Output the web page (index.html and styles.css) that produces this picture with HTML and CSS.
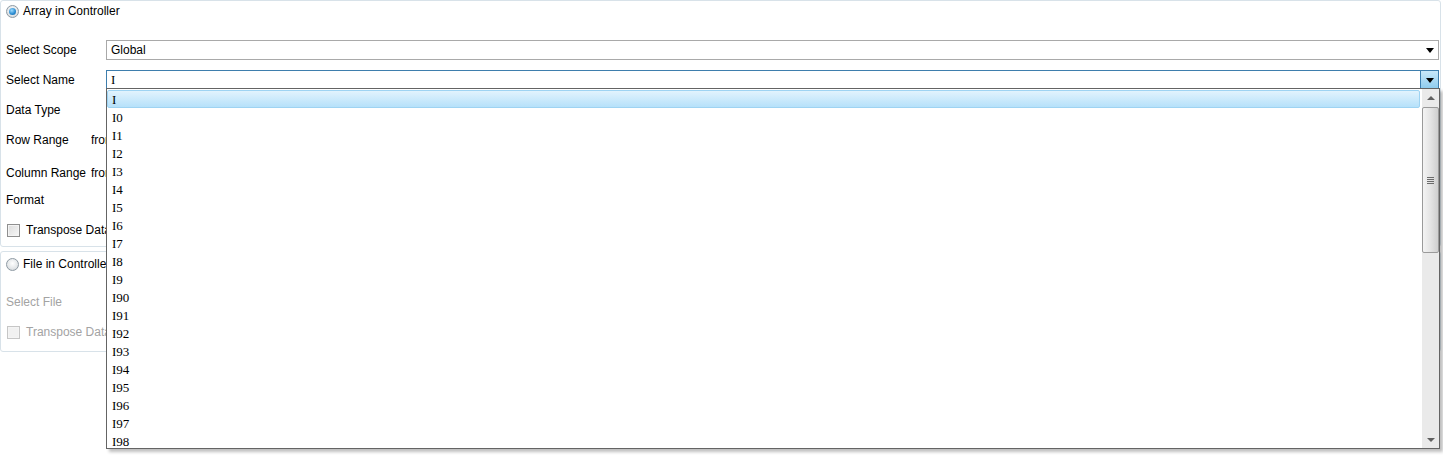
FILE: index.html
```html
<!DOCTYPE html>
<html>
<head>
<meta charset="utf-8">
<link rel="stylesheet" href="styles.css">
</head>
<body>
<div class="page">
  <div class="panel panel-array">
    <div class="row row-radio">
      <span class="radio checked"></span><span class="radio-label">Array in Controller</span>
    </div>
    <div class="row row-scope">
      <span class="label">Select Scope</span>
      <div class="combo"><span class="combo-text">Global</span><span class="combo-btn"><span class="tri"></span></span></div>
    </div>
    <div class="row row-name">
      <span class="label">Select Name</span>
      <div class="combo focused"><span class="combo-text">I</span><span class="combo-btn"><span class="tri"></span></span></div>
    </div>
    <div class="row row-dtype">
      <span class="label">Data Type</span>
    </div>
    <div class="row row-range">
      <span class="label short">Row Range</span><span class="from">from</span>
    </div>
    <div class="row row-col">
      <span class="label short">Column Range</span><span class="from">from</span>
    </div>
    <div class="row row-format">
      <span class="label">Format</span>
    </div>
    <div class="row row-transpose">
      <span class="check"></span><span class="check-label">Transpose Data</span>
    </div>
  </div>
  <div class="panel panel-file">
    <div class="row row-radio">
      <span class="radio"></span><span class="radio-label">File in Controller</span>
    </div>
    <div class="row row-file">
      <span class="label disabled">Select File</span>
    </div>
    <div class="row row-transpose2">
      <span class="check disabled"></span><span class="check-label disabled">Transpose Data</span>
    </div>
  </div>

  <div class="dropdown">
    <ul class="list">
      <li class="selected">I</li>
      <li>I0</li>
      <li>I1</li>
      <li>I2</li>
      <li>I3</li>
      <li>I4</li>
      <li>I5</li>
      <li>I6</li>
      <li>I7</li>
      <li>I8</li>
      <li>I9</li>
      <li>I90</li>
      <li>I91</li>
      <li>I92</li>
      <li>I93</li>
      <li>I94</li>
      <li>I95</li>
      <li>I96</li>
      <li>I97</li>
      <li>I98</li>
    </ul>
    <div class="scrollbar">
      <span class="sb-arrow up"></span>
      <div class="sb-track">
        <div class="sb-thumb"><span class="grip"></span></div>
      </div>
      <span class="sb-arrow down"></span>
    </div>
  </div>
</div>
</body>
</html>
```
FILE: styles.css
```css
html, body {
  margin: 0;
  padding: 0;
  background: #ffffff;
}
body {
  font-family: "Liberation Sans", Arial, sans-serif;
  font-size: 12px;
  color: #000;
  width: 1443px;
  height: 455px;
  overflow: hidden;
}
.page {
  position: relative;
  padding: 0 1px 0 0;
}
.panel {
  border: 1px solid #d8e2e9;
  border-radius: 3px;
  margin-left: 0;
  width: 1441px;
  box-sizing: border-box;
  display: flex;
  flex-direction: column;
}
.panel-array {
  padding-bottom: 6px;
}
.panel-file {
  margin-top: 4px;
  padding-bottom: 9px;
}
.row {
  height: 20px;
  display: flex;
  align-items: center;
  padding-left: 5px;
}
.row-scope { margin-top: 19px; }
.row-name { margin-top: 10px; }
.row-dtype { margin-top: 10px; }
.row-range { margin-top: 10px; }
.row-col { margin-top: 13px; }
.row-format { margin-top: 7px; }
.row-transpose { margin-top: 10px; }
.panel-file .row-radio { margin-top: 2px; }
.row-file { margin-top: 18px; }
.row-transpose2 { margin-top: 10px; }

.label {
  width: 100px;
  flex: none;
}
.label.short {
  width: 85px;
}
.from {
  width: 15px;
  overflow: hidden;
  white-space: nowrap;
  flex: none;
}
.disabled {
  color: #a3a3a3;
}
.radio {
  width: 11px;
  height: 11px;
  border-radius: 50%;
  border: 1px solid #8e9aa3;
  background: radial-gradient(circle at 50% 40%, #ffffff 0%, #e3e6e8 60%, #c5cacd 100%);
  box-sizing: content-box;
  margin-right: 4px;
  position: relative;
  flex: none;
}
.radio.checked::after {
  content: "";
  position: absolute;
  left: 2px;
  top: 2px;
  width: 7px;
  height: 7px;
  border-radius: 50%;
  background: radial-gradient(circle at 40% 35%, #9fdcff 0%, #2f8fd3 55%, #0e5da0 100%);
}
.radio-label {
  font-size: 12px;
}
.check {
  width: 11px;
  height: 11px;
  border: 1px solid #8f8f8f;
  background: linear-gradient(135deg, #dcdcdc, #f7f7f7);
  box-shadow: inset 0 0 0 1px #f4f4f4;
  margin-right: 6px;
  margin-left: 1px;
  flex: none;
}
.check.disabled {
  border-color: #c6c6c6;
  background: #f1f1f1;
}
.combo {
  width: 1333px;
  height: 20px;
  box-sizing: border-box;
  border: 1px solid #a9a9a9;
  display: flex;
  align-items: center;
  background: #fff;
}
.combo.focused {
  border-color: #3e7ead;
}
.combo-text {
  flex: 1;
  padding-left: 4px;
}
.combo.focused .combo-text {
  font-family: "Liberation Serif", "Times New Roman", serif;
  font-size: 13px;
}
.combo-btn {
  width: 17px;
  height: 18px;
  display: flex;
  align-items: center;
  justify-content: center;
}
.combo.focused .combo-btn {
  background: linear-gradient(#c8e8fa, #8ccbee);
  border-left: 1px solid #3c7fb1;
}
.tri {
  width: 0;
  height: 0;
  border-left: 4px solid transparent;
  border-right: 4px solid transparent;
  border-top: 5px solid #000;
}

.dropdown {
  position: absolute;
  left: 106px;
  top: 88px;
  width: 1334px;
  height: 361px;
  box-sizing: border-box;
  border: 1px solid #646464;
  background: #fff;
  display: flex;
  box-shadow: 3px 3px 3px rgba(0, 0, 0, 0.25);
}
.list {
  list-style: none;
  margin: 0;
  padding: 1px 0 0 0;
  flex: 1;
  font-family: "Liberation Serif", "Times New Roman", serif;
  font-size: 13px;
  color: #000;
  overflow: hidden;
}
.list li {
  height: 18px;
  line-height: 17px;
  padding-top: 1px;
  padding-left: 5px;
  box-sizing: border-box;
}
.list li.selected {
  background: linear-gradient(#e2f3fd, #b6e1fa);
  border: 1px solid #9ed3f2;
  border-radius: 2px;
  padding-left: 4px;
  padding-top: 1px;
  line-height: 15px;
  margin-right: 2px;
}
.scrollbar {
  width: 17px;
  background: #eaeaea;
  display: flex;
  flex-direction: column;
  align-items: center;
}
.sb-arrow {
  height: 17px;
  width: 17px;
  display: flex;
  align-items: center;
  justify-content: center;
}
.sb-arrow::after {
  content: "";
  border-left: 4px solid transparent;
  border-right: 4px solid transparent;
}
.sb-arrow.up::after {
  border-bottom: 4px solid #606060;
}
.sb-arrow.down::after {
  border-top: 4px solid #606060;
}
.sb-track {
  flex: 1;
  width: 17px;
  display: flex;
  flex-direction: column;
}
.sb-thumb {
  margin-top: 1px;
  height: 146px;
  box-sizing: border-box;
  border: 1px solid #9a9a9a;
  border-radius: 2px;
  background: linear-gradient(90deg, #f4f4f4, #e4e4e4 50%, #cfcfcf);
  display: flex;
  align-items: center;
  justify-content: center;
}
.grip {
  width: 7px;
  height: 7px;
  background: repeating-linear-gradient(#6b6b6b 0 1px, transparent 1px 2px);
}
```
